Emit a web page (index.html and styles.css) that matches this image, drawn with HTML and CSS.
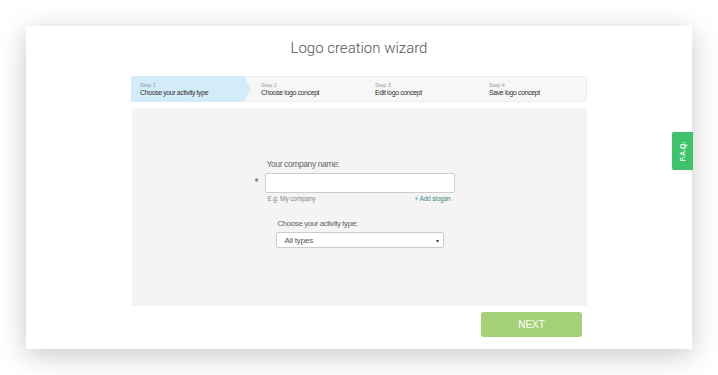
FILE: index.html
```html
<!DOCTYPE html>
<html lang="en">
<head>
  <meta charset="UTF-8">
  <meta name="viewport" content="width=device-width, initial-scale=1.0">
  <title>Logo creation wizard</title>
  <link rel="stylesheet" href="styles.css">
</head>
<body>
  <div class="card">
    <h1 class="title">Logo creation wizard</h1>

    <div class="wizard">
      <div class="steps">
        <div class="step active">
          <span class="step-num">Step 1</span>
          <span class="step-name">Choose your activity type</span>
        </div>
        <div class="step">
          <span class="step-num">Step 2</span>
          <span class="step-name">Choose logo concept</span>
        </div>
        <div class="step">
          <span class="step-num">Step 3</span>
          <span class="step-name">Edit logo concept</span>
        </div>
        <div class="step">
          <span class="step-num">Step 4</span>
          <span class="step-name">Save logo concept</span>
        </div>
      </div>

      <div class="panel">
        <div class="form">
          <label class="label">Your company name:</label>
          <div class="field">
            <span class="required">*</span>
            <input class="input" type="text">
          </div>
          <div class="hint-row">
            <span class="hint">E.g. My company</span>
            <a class="slogan" href="#">+ Add slogan</a>
          </div>

          <div class="activity">
            <label class="label small">Choose your activity type:</label>
            <div class="select">
              <span>All types</span>
              <span class="caret">&#9662;</span>
            </div>
          </div>
        </div>
      </div>

      <div class="actions">
        <button class="next">NEXT</button>
      </div>
    </div>
  </div>

  <div class="faq"><span>F.A.Q.</span></div>
</body>
</html>
```

FILE: styles.css
```css
body {
  margin: 0;
  padding: 26px;
  background: #fff;
  font-family: "Liberation Sans", Arial, sans-serif;
  color: #333;
}
.card {
  width: 666px;
  height: 323px;
  box-sizing: border-box;
  padding-top: 12px;
  background: #fff;
  box-shadow: 0 6px 26px rgba(0, 0, 0, 0.22);
}
.title {
  margin: 0;
  text-align: center;
  font-family: Roboto, sans-serif;
  font-weight: 300;
  font-size: 15px;
  line-height: 20px;
  color: #555;
}
.wizard {
  width: 456px;
  margin: 18px auto 0;
}
.steps {
  display: flex;
  height: 26px;
  background: #f7f7f7;
  border: 1px solid #eeeeee;
  box-sizing: border-box;
  border-radius: 2px;
}
.step {
  width: 114px;
  box-sizing: border-box;
  display: flex;
  flex-direction: column;
  justify-content: center;
  padding-left: 10px;
  line-height: 7px;
}
.step:last-child {
  flex: 1;
}
.step.active {
  width: 120px;
  padding-left: 9px;
  margin: -1px 0 -1px -1px;
  background: #d3ecfa;
  clip-path: polygon(0 0, calc(100% - 7px) 0, 100% 50%, calc(100% - 7px) 100%, 0 100%);
}
.step-num {
  font-size: 5.5px;
  color: #999;
}
.step-name {
  font-size: 7px;
  letter-spacing: -0.4px;
  color: #333;
}
.panel {
  height: 198px;
  margin-top: 6px;
  margin-left: 1px;
  background: #f4f4f4;
}
.form {
  width: 190px;
  margin: 0 auto;
  padding-top: 50px;
}
.label {
  display: block;
  padding-left: 2px;
  font-size: 8.5px;
  letter-spacing: -0.4px;
  line-height: 12px;
  color: #666;
}
.field {
  position: relative;
  margin-top: 3px;
}
.required {
  position: absolute;
  left: -10px;
  top: 4px;
  font-size: 10px;
  color: #555;
}
.input {
  display: block;
  width: 190px;
  height: 20px;
  box-sizing: border-box;
  margin: 0;
  border: 1px solid #cccccc;
  border-radius: 2px;
  background: #fff;
}
.hint-row {
  display: flex;
  justify-content: space-between;
  margin-top: 2px;
  padding: 0 4px 0 3px;
  font-size: 6.5px;
  letter-spacing: -0.15px;
  line-height: 8px;
}
.hint {
  color: #888;
}
.slogan {
  color: #3f8a86;
  text-decoration: none;
}
.activity {
  width: 168px;
  margin: 15px auto 0;
}
.label.small {
  font-size: 8px;
  letter-spacing: -0.45px;
}
.select {
  display: flex;
  justify-content: space-between;
  align-items: center;
  height: 16px;
  margin-top: 2px;
  padding: 0 4px 0 8px;
  box-sizing: border-box;
  background: #fff;
  border: 1px solid #cccccc;
  border-radius: 2px;
  font-size: 8px;
  letter-spacing: -0.2px;
  color: #555;
}
.caret {
  font-size: 6px;
  color: #444;
}
.actions {
  display: flex;
  justify-content: flex-end;
  margin-top: 6px;
  padding-right: 5px;
}
.next {
  width: 101px;
  height: 25px;
  border: 0;
  border-radius: 3px;
  background: #a6d277;
  color: #fff;
  font-family: "Liberation Sans", Arial, sans-serif;
  font-size: 10px;
}
.faq {
  position: absolute;
  left: 672px;
  top: 132px;
  width: 21px;
  height: 38px;
  display: flex;
  align-items: center;
  justify-content: center;
  background: #3ec26c;
  border-radius: 2px 0 0 2px;
}
.faq span {
  transform: rotate(-90deg);
  font-size: 7px;
  font-weight: bold;
  color: #fff;
  white-space: nowrap;
}
```
